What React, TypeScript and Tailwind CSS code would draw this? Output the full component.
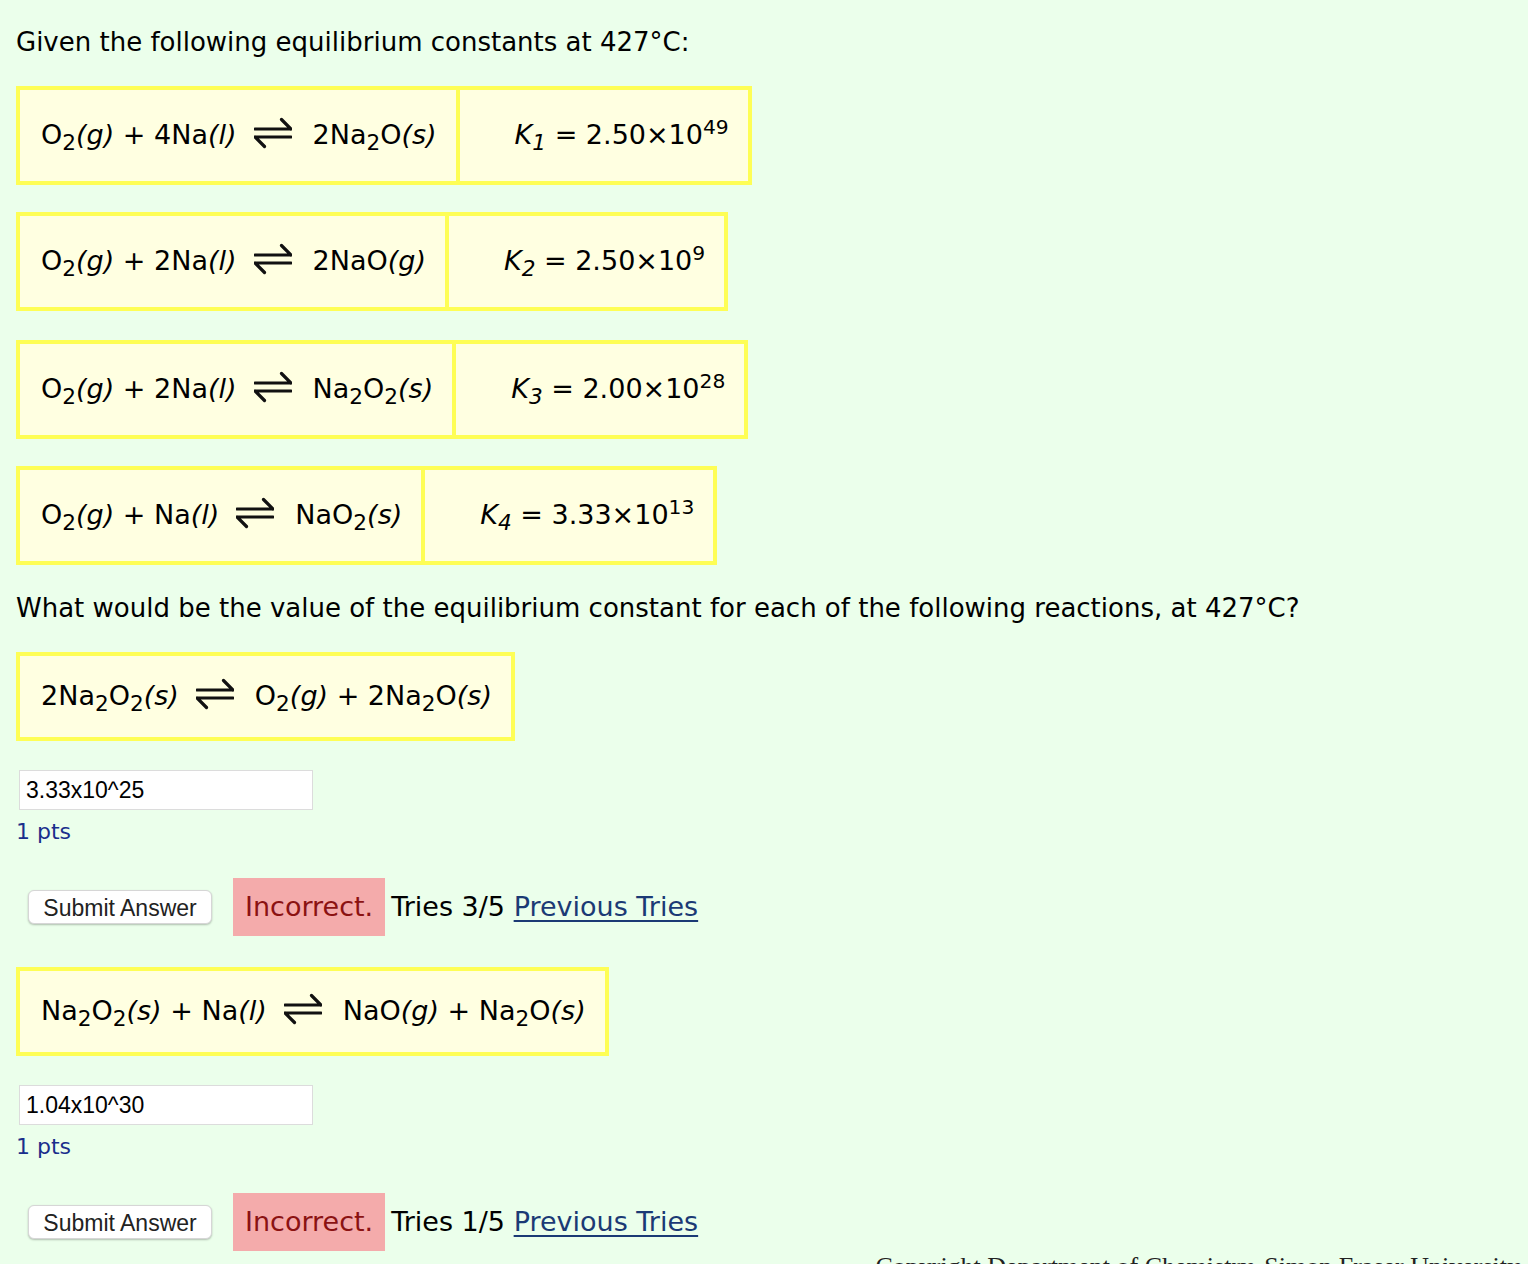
import React from "react";

const font = { fontFamily: '"DejaVu Sans", Verdana, sans-serif' };

function Arrow() {
  return (
    <svg width="38" height="32" viewBox="0 0 38 32" className="inline-block ml-[17px] mr-[21px] align-[-5px]">
      <path d="M1 12 H37 M37 12 L27.5 2.5" stroke="#111" strokeWidth="3.2" fill="none" strokeLinecap="round" />
      <path d="M1 20 H37 M1 20 L10.5 29.5" stroke="#111" strokeWidth="3.2" fill="none" strokeLinecap="round" />
    </svg>
  );
}

const S = ({ children }: { children: React.ReactNode }) => <sub className="text-[80%]">{children}</sub>;
const I = ({ children }: { children: React.ReactNode }) => <i>{children}</i>;

function EqBox({ eq, k }: { eq: React.ReactNode; k?: React.ReactNode }) {
  return (
    <div className="inline-flex border-4 border-[#fefe55] bg-[#ffffe1] text-[27px] text-black">
      <div className={`${k ? "h-[91px]" : "h-[81px]"} flex items-center pl-[21px] pr-[19px] whitespace-nowrap`}>
        <span>{eq}</span>
      </div>
      {k && (
        <div className="border-l-4 border-[#fefe55] flex items-center pl-[55px] pr-[19px] whitespace-nowrap">
          <span>{k}</span>
        </div>
      )}
    </div>
  );
}

function Answer({ value, tries }: { value: string; tries: string }) {
  return (
    <>
      <div className="mt-[29px] ml-[3px] w-[294px] h-[40px] border border-[#dcdcdc] bg-white flex items-center px-[6px] text-[23px] text-black" style={{ fontFamily: '"Liberation Sans", Arial, sans-serif' }}>
        {value}
      </div>
      <div className="mt-[10px] h-[24px] leading-[24px] text-[22px] text-[#1a2e8c]">1 pts</div>
      <div className="mt-[34px] h-[58px] flex items-center">
        <button
          className="ml-[12px] w-[184px] h-[34px] bg-white rounded-[6px] border border-[#d6d6d6] shadow-[0_1px_2px_rgba(0,0,0,0.25)] text-[23px] text-[#222]"
          style={{ fontFamily: '"Liberation Sans", Arial, sans-serif' }}
        >
          Submit Answer
        </button>
        <span className="ml-[21px] h-[58px] px-[12px] flex items-center bg-[#f4abab] text-[#8b1212] text-[27px]">Incorrect.</span>
        <span className="ml-[6px] text-[27px] text-black">
          Tries {tries} <a className="text-[#1b3a75] underline underline-offset-[4px]" href="#">Previous Tries</a>
        </span>
      </div>
    </>
  );
}

export default function App() {
  return (
    <div className="min-h-screen bg-[#ebffeb] pl-[16px] pt-[27px] overflow-hidden" style={font}>
      <div className="flex flex-col items-start">
        <div className="h-[30px] leading-[30px] text-[26px] text-black">Given the following equilibrium constants at 427°C:</div>
        <div className="mt-[29px]" />
        <EqBox
          eq={<>O<S>2</S><I>(g)</I> + 4Na<I>(l)</I><Arrow />2Na<S>2</S>O<I>(s)</I></>}
          k={<><I>K<S>1</S></I> = 2.50×10<sup>49</sup></>}
        />
        <div className="mt-[27px]" />
        <EqBox
          eq={<>O<S>2</S><I>(g)</I> + 2Na<I>(l)</I><Arrow />2NaO<I>(g)</I></>}
          k={<><I>K<S>2</S></I> = 2.50×10<sup>9</sup></>}
        />
        <div className="mt-[29px]" />
        <EqBox
          eq={<>O<S>2</S><I>(g)</I> + 2Na<I>(l)</I><Arrow />Na<S>2</S>O<S>2</S><I>(s)</I></>}
          k={<><I>K<S>3</S></I> = 2.00×10<sup>28</sup></>}
        />
        <div className="mt-[27px]" />
        <EqBox
          eq={<>O<S>2</S><I>(g)</I> + Na<I>(l)</I><Arrow />NaO<S>2</S><I>(s)</I></>}
          k={<><I>K<S>4</S></I> = 3.33×10<sup>13</sup></>}
        />
        <div className="mt-[28px] h-[30px] leading-[30px] text-[26px] text-black">
          What would be the value of the equilibrium constant for each of the following reactions, at 427°C?
        </div>
        <div className="mt-[29px]" />
        <EqBox eq={<>2Na<S>2</S>O<S>2</S><I>(s)</I><Arrow />O<S>2</S><I>(g)</I> + 2Na<S>2</S>O<I>(s)</I></>} />
        <Answer value="3.33x10^25" tries="3/5" />
        <div className="mt-[31px]" />
        <EqBox eq={<>Na<S>2</S>O<S>2</S><I>(s)</I> + Na<I>(l)</I><Arrow />NaO<I>(g)</I> + Na<S>2</S>O<I>(s)</I></>} />
        <Answer value="1.04x10^30" tries="1/5" />
      </div>
      <div
        className="mt-[1px] pr-[8px] text-right text-[26px] leading-[30px] text-[#222]"
        style={{ fontFamily: '"Liberation Serif", "Times New Roman", serif' }}
      >
        Copyright Department of Chemistry, Simon Fraser University
      </div>
    </div>
  );
}
